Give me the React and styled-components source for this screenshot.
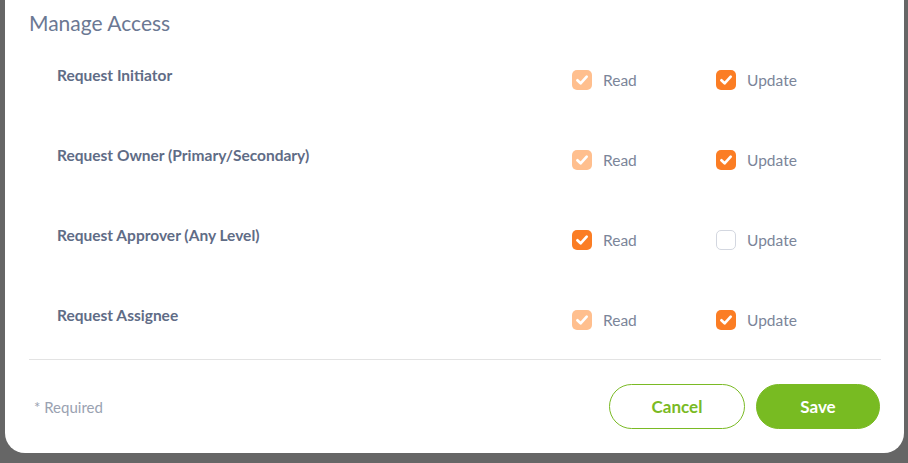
import styled, { createGlobalStyle } from "styled-components";

const GlobalStyle = createGlobalStyle`
  html, body {
    margin: 0;
    padding: 0;
    background: #666666;
    font-family: Lato, "Noto Sans", sans-serif;
  }
`;

const Modal = styled.div`
  box-sizing: border-box;
  margin-left: 5px;
  width: 899px;
  height: 453px;
  background: #ffffff;
  border-radius: 0 0 20px 20px;
  padding: 0 23px 0 24px;
  display: flex;
  flex-direction: column;
`;

const Title = styled.h2`
  margin: 0;
  padding-top: 10px;
  height: 55px;
  box-sizing: border-box;
  font-size: 21px;
  line-height: 26px;
  font-weight: 400;
  color: #6b7893;
`;

const RoleList = styled.div`
  display: flex;
  flex-direction: column;
  gap: 55px;
  padding: 10px 0 0 28px;
`;

const Row = styled.div`
  display: grid;
  grid-template-columns: 1fr 144px 165px;
  align-items: start;
  height: 25px;
`;

const RoleName = styled.div`
  font-size: 15.5px;
  line-height: 20px;
  font-weight: 700;
  color: #5f6c86;
`;

const Option = styled.label`
  display: flex;
  align-items: center;
  gap: 11px;
  margin-top: 5px;
  font-size: 15.5px;
  line-height: 20px;
  color: #7b8599;
`;

const Box = styled.span`
  box-sizing: border-box;
  width: 20px;
  height: 20px;
  border-radius: 5px;
  display: flex;
  align-items: center;
  justify-content: center;
  background: ${(p) => (p.$checked ? (p.$disabled ? "#ffbf8e" : "#fb7d24") : "#ffffff")};
  border: ${(p) => (p.$checked ? "none" : "1px solid #d3d7e0")};
`;

const Divider = styled.hr`
  margin: 29px 0 0;
  border: none;
  border-top: 1px solid #e3e3e3;
`;

const Footer = styled.div`
  display: flex;
  align-items: center;
  padding: 24px 1px 24px 5px;
`;

const Required = styled.span`
  flex: 1;
  font-size: 15px;
  color: #9aa2b1;
`;

const Button = styled.button`
  box-sizing: border-box;
  height: 45px;
  width: ${(p) => p.$width}px;
  border-radius: 23px;
  font-family: inherit;
  font-size: 17px;
  font-weight: 700;
  border: 1px solid #7aba24;
  background: ${(p) => (p.$primary ? "#78bb22" : "#ffffff")};
  color: ${(p) => (p.$primary ? "#ffffff" : "#7aba24")};
  margin-left: ${(p) => (p.$primary ? "11px" : "0")};
`;

const Check = () => (
  <svg width="14" height="14" viewBox="0 0 14 14">
    <path d="M2.4 7.3 L5.6 10.3 L11.7 3.7" fill="none" stroke="#fff" strokeWidth="2.7" strokeLinecap="round" strokeLinejoin="round" />
  </svg>
);

const Checkbox = ({ label, checked, disabled }) => (
  <Option>
    <Box $checked={checked} $disabled={disabled}>
      {checked && <Check />}
    </Box>
    {label}
  </Option>
);

const roles = [
  { name: "Request Initiator", read: [true, true], update: [true, false] },
  { name: "Request Owner (Primary/Secondary)", read: [true, true], update: [true, false] },
  { name: "Request Approver (Any Level)", read: [true, false], update: [false, false] },
  { name: "Request Assignee", read: [true, true], update: [true, false] },
];

export default function App() {
  return (
    <>
      <GlobalStyle />
      <Modal>
        <Title>Manage Access</Title>
        <RoleList>
          {roles.map((r) => (
            <Row key={r.name}>
              <RoleName>{r.name}</RoleName>
              <Checkbox label="Read" checked={r.read[0]} disabled={r.read[1]} />
              <Checkbox label="Update" checked={r.update[0]} disabled={r.update[1]} />
            </Row>
          ))}
        </RoleList>
        <Divider />
        <Footer>
          <Required>* Required</Required>
          <Button $width={136}>Cancel</Button>
          <Button $width={124} $primary>Save</Button>
        </Footer>
      </Modal>
    </>
  );
}
